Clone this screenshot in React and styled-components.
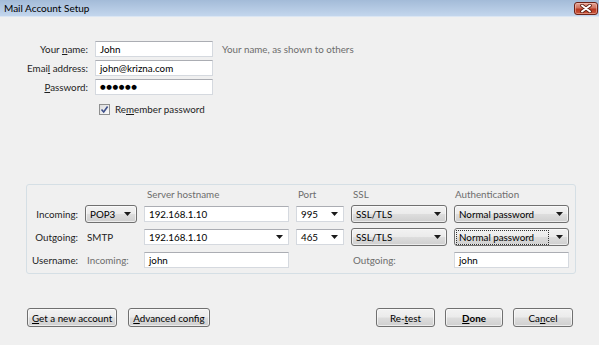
import React from "react";
import styled, { createGlobalStyle } from "styled-components";

const FONT = `Lato, "Segoe UI", "Open Sans", sans-serif`;

const Global = createGlobalStyle`
  html, body { margin: 0; padding: 0; }
  body {
    width: 599px; height: 345px; overflow: hidden;
    background: #f0f0f0;
    font-family: ${FONT};
    font-size: 9.8px;
    color: #1e1e1e;
  }
  u { text-decoration: underline; text-underline-offset: 1px; }
`;

const Window = styled.div`
  width: 599px; height: 345px;
  display: flex; flex-direction: column;
  background: #f0f0f0;
`;

const TitleBar = styled.div`
  height: 17px;
  flex: none;
  display: flex; align-items: flex-start; justify-content: space-between;
  background: linear-gradient(#a3bbd8, #c3d6ed);
  border-bottom: 1px solid #dbe6f3;
  box-sizing: border-box;
`;

const Title = styled.div`
  padding: 2px 0 0 4px;
  font-size: 10px;
  line-height: 13px;
  color: #000;
`;

const CloseBtn = styled.div`
  width: 24px; height: 13px;
  margin: 2px 1px 0 0;
  box-sizing: border-box;
  border: 1px solid #6d2216;
  border-radius: 3px;
  background: linear-gradient(#e3a395 0%, #d0735f 45%, #b9371f 55%, #c8553b 100%);
  box-shadow: inset 0 0 0 1px rgba(255, 210, 200, 0.45);
  display: flex; align-items: center; justify-content: center;
`;

const Form = styled.div`
  margin-top: 24px;
  display: grid;
  grid-template-columns: 88px 118px 1fr;
  grid-auto-rows: 16px;
  column-gap: 7px;
  row-gap: 3px;
  align-items: center;
`;

const Label = styled.div`
  text-align: right;
  white-space: nowrap;
  color: #1e1e1e;
`;

const Hint = styled.div`
  padding-left: 2px;
  color: #6d6d6d;
  white-space: nowrap;
`;

const Field = styled.div`
  height: 16px;
  box-sizing: border-box;
  background: #fff;
  border: 1px solid #d5d9df;
  border-top-color: #abadb3;
  display: flex; align-items: center;
  padding: 0 4px;
  position: relative;
  white-space: nowrap;
  color: #000;
`;

const Dots = styled.span`
  font-family: "DejaVu Sans", sans-serif;
  font-size: 6.5px;
  letter-spacing: 0.6px;
  line-height: 1;
`;

const CheckRow = styled.div`
  grid-column: 2 / 4;
  height: 12px;
  margin-top: 6px;
  display: flex; align-items: center; gap: 5px;
  padding-left: 4px;
`;

const Box = styled.div`
  width: 11px; height: 11px;
  box-sizing: border-box;
  border: 1px solid #8e8f8f;
  background: linear-gradient(135deg, #dcdcdc, #fbfbfb);
  display: flex; align-items: center; justify-content: center;
`;

const Group = styled.div`
  margin: 70px 23px 0 26px;
  box-sizing: border-box;
  border: 1px solid #d5dfe5;
  border-radius: 3px;
  padding: 3px 6px 4px 5px;
  display: grid;
  grid-template-columns: 46px 52px 145px 48px 96px 115px;
  grid-template-rows: 12px 18px 18px 18px;
  column-gap: 7px;
  row-gap: 5px;
  align-items: center;
`;

const Header = styled.div`
  color: #6d6d6d;
  padding-left: ${(p) => p.$pad ?? 2}px;
  white-space: nowrap;
  line-height: 12px;
`;

const Plain = styled.div`
  padding-left: 2px;
  color: ${(p) => (p.$muted ? "#6d6d6d" : "#1e1e1e")};
  white-space: nowrap;
`;

const DropBtn = styled.div`
  height: 18px;
  box-sizing: border-box;
  border: 1px solid #707070;
  border-radius: 3px;
  background: linear-gradient(#f2f2f2 0%, #ebebeb 48%, #dddddd 52%, #cfcfcf 100%);
  box-shadow: inset 0 0 0 1px rgba(255, 255, 255, 0.6);
  display: flex; align-items: center; justify-content: space-between;
  padding: 0 5px 0 ${(p) => (p.$focus ? "2px" : "4px")};
  color: #000;
  white-space: nowrap;
`;

const FocusText = styled.span`
  flex: 1;
  outline: 1px dotted #333;
  outline-offset: 0;
  padding: 0 2px;
  margin-right: 8px;
  line-height: 13px;
`;

const ArrowWrap = styled.span`
  display: inline-flex;
  flex: none;
  ${(p) => p.$abs && "position: absolute; right: 5px; top: 5px;"}
`;

const Arrow = ({ abs }) => (
  <ArrowWrap $abs={abs}>
    <svg width="7" height="4" viewBox="0 0 7 4">
      <path d="M0 0H7L3.5 4Z" fill="#1a1a1a" />
    </svg>
  </ArrowWrap>
);

const Buttons = styled.div`
  margin-top: 34px;
  padding: 0 26px 0 27px;
  display: flex; justify-content: space-between;
`;

const BtnGroup = styled.div`
  display: flex;
  gap: ${(p) => p.$gap}px;
`;

const Button = styled.div`
  height: 19px;
  min-width: ${(p) => p.$min || 0}px;
  box-sizing: border-box;
  padding: 0 4px;
  border: 1px solid #707070;
  border-radius: 3px;
  background: linear-gradient(#f2f2f2 0%, #ebebeb 48%, #dddddd 52%, #cfcfcf 100%);
  box-shadow: inset 0 0 0 1px rgba(255, 255, 255, 0.6);
  display: flex; align-items: center; justify-content: center;
  color: #000;
  white-space: nowrap;
  font-weight: ${(p) => (p.$bold ? 700 : 400)};
`;

export default function App() {
  return (
    <Window>
      <Global />
      <TitleBar>
        <Title>Mail Account Setup</Title>
        <CloseBtn>
          <svg width="12" height="9" viewBox="0 0 12 9">
            <path d="M2 1.5L10 7.5M10 1.5L2 7.5" stroke="#5b1d12" strokeWidth="3.6" strokeLinecap="round" />
            <path d="M2 1.5L10 7.5M10 1.5L2 7.5" stroke="#fff" strokeWidth="2" strokeLinecap="round" />
          </svg>
        </CloseBtn>
      </TitleBar>

      <Form>
        <Label>Your <u>n</u>ame:</Label>
        <Field>John</Field>
        <Hint>Your name, as shown to others</Hint>

        <Label>Emai<u>l</u> address:</Label>
        <Field>john@krizna.com</Field>
        <div />

        <Label><u>P</u>assword:</Label>
        <Field><Dots>●●●●●●</Dots></Field>
        <div />

        <div />
        <CheckRow>
          <Box>
            <svg width="9" height="9" viewBox="0 0 9 9">
              <path d="M1.5 4.5L3.7 7L7.6 1.5" fill="none" stroke="#3d4f8a" strokeWidth="1.6" />
            </svg>
          </Box>
          <span>Re<u>m</u>ember password</span>
        </CheckRow>
      </Form>

      <Group>
        <div />
        <div />
        <Header $pad={3}>Server hostname</Header>
        <Header>Port</Header>
        <Header>SSL</Header>
        <Header $pad={1}>Authentication</Header>

        <Label>Incoming:</Label>
        <DropBtn>POP3 <Arrow /></DropBtn>
        <Field>192.168.1.10</Field>
        <Field>995<Arrow abs /></Field>
        <DropBtn>SSL/TLS <Arrow /></DropBtn>
        <DropBtn>Normal password <Arrow /></DropBtn>

        <Label>Outgoing:</Label>
        <Plain>SMTP</Plain>
        <Field>192.168.1.10<Arrow abs /></Field>
        <Field>465<Arrow abs /></Field>
        <DropBtn>SSL/TLS <Arrow /></DropBtn>
        <DropBtn $focus>
          <FocusText>Normal password</FocusText>
          <Arrow />
        </DropBtn>

        <Label>Username:</Label>
        <Plain $muted>Incoming:</Plain>
        <Field>john</Field>
        <div />
        <Plain $muted>Outgoing:</Plain>
        <Field>john</Field>
      </Group>

      <Buttons>
        <BtnGroup $gap={11}>
          <Button><span><u>G</u>et a new account</span></Button>
          <Button><span><u>A</u>dvanced config</span></Button>
        </BtnGroup>
        <BtnGroup $gap={10}>
          <Button $min={59}><span>Re-<u>t</u>est</span></Button>
          <Button $min={58} $bold><span><u>D</u>one</span></Button>
          <Button $min={60}><span>Ca<u>n</u>cel</span></Button>
        </BtnGroup>
      </Buttons>
    </Window>
  );
}
